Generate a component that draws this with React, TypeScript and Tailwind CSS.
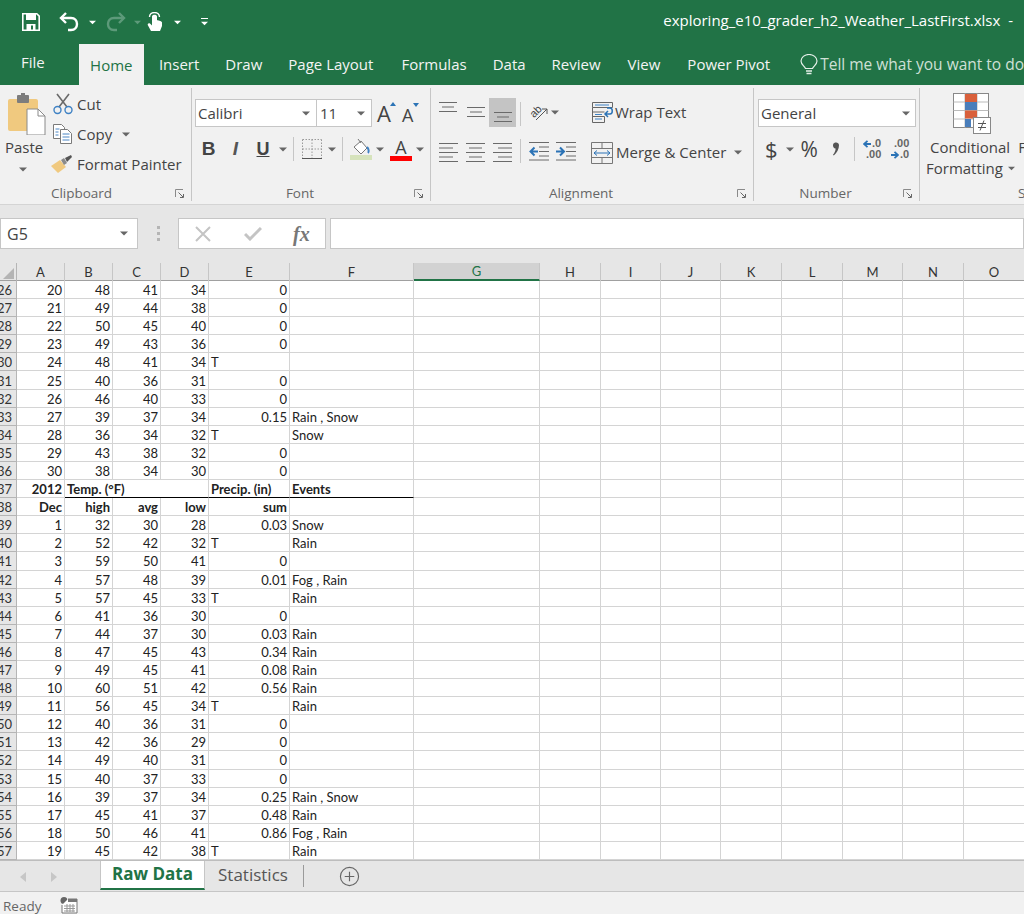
import React from "react";

type Row = [string, string, string, string, string, string, string];
const rows: Row[] = [
  ["26","20","48","41","34","0",""],["27","21","49","44","38","0",""],["28","22","50","45","40","0",""],["29","23","49","43","36","0",""],
  ["30","24","48","41","34","T",""],["31","25","40","36","31","0",""],["32","26","46","40","33","0",""],["33","27","39","37","34","0.15","Rain , Snow"],
  ["34","28","36","34","32","T","Snow"],["35","29","43","38","32","0",""],["36","30","38","34","30","0",""],
  ["37","2012","Temp. (°F)","","","Precip. (in)","Events"],["38","Dec","high","avg","low","sum",""],
  ["39","1","32","30","28","0.03","Snow"],["40","2","52","42","32","T","Rain"],["41","3","59","50","41","0",""],["42","4","57","48","39","0.01","Fog , Rain"],
  ["43","5","57","45","33","T","Rain"],["44","6","41","36","30","0",""],["45","7","44","37","30","0.03","Rain"],["46","8","47","45","43","0.34","Rain"],
  ["47","9","49","45","41","0.08","Rain"],["48","10","60","51","42","0.56","Rain"],["49","11","56","45","34","T","Rain"],["50","12","40","36","31","0",""],
  ["51","13","42","36","29","0",""],["52","14","49","40","31","0",""],["53","15","40","37","33","0",""],["54","16","39","37","34","0.25","Rain , Snow"],
  ["55","17","45","41","37","0.48","Rain"],["56","18","50","46","41","0.86","Fog , Rain"],["57","19","45","42","38","T","Rain"],
];

const colGrid = "grid grid-cols-[17px_48px_48px_48px_48px_81px_124px_126px_61px_60px_60px_61px_61px_60px_61px_61px]";
const headers = ["A","B","C","D","E","F","G","H","I","J","K","L","M","N","O"];

function Caret({ fill = "#666", w = 8 }: { fill?: string; w?: number }) {
  return <svg width={w} height={5} viewBox="0 0 8 5" className="shrink-0"><path d="M0 0.5h8L4 4.5z" fill={fill} /></svg>;
}
function Launcher() {
  return (
    <svg width="10" height="10" viewBox="0 0 10 10" className="shrink-0">
      <path d="M0.5 8V0.5H8" stroke="#8a8a8a" fill="none" />
      <path d="M3.5 3.5L8 8M8.5 5v3.5H5" stroke="#666" fill="none" />
    </svg>
  );
}
function VSep({ cls = "h-[24px]" }: { cls?: string }) {
  return <div className={"w-px bg-[#c6c6c6] shrink-0 " + cls} />;
}
function Lines({ ws }: { ws: [number, number][] }) {
  return (
    <svg width="20" height="20" viewBox="0 0 20 20" className="shrink-0">
      {ws.map(([a, b], i) => (
        <path key={i} d={`M${a} ${1.5 + i * 4.5}H${b}`} stroke="#6a6a6a" />
      ))}
    </svg>
  );
}
function Indent({ dir }: { dir: "l" | "r" }) {
  return (
    <svg width="20" height="20" viewBox="0 0 20 20" className="shrink-0">
      {[1.5, 6, 10.5, 15, 19].map((y, i) => (
        <path key={i} d={i === 0 || i === 4 ? `M0 ${y}H20` : `M10 ${y}H20`} stroke="#6a6a6a" />
      ))}
      {dir === "l" ? (
        <path d="M9 10.5H2M5.5 6.5L1.5 10.5L5.5 14.5" stroke="#2b73b6" strokeWidth="2" fill="none" />
      ) : (
        <path d="M0 10.5H7.5M4 6.5L8 10.5L4 14.5" stroke="#2b73b6" strokeWidth="2" fill="none" />
      )}
    </svg>
  );
}

function Group({ w, label, children, labelCls = "" }: { w: string; label: string; children: React.ReactNode; labelCls?: string }) {
  return (
    <div className={"flex flex-col shrink-0 h-full pt-[3px] pb-[3px] " + w}>
      <div className="flex-1 flex flex-col border-r border-[#c6c6c6] min-h-0">
        <div className="flex-1 min-h-0">{children}</div>
        <div className="h-[22px] pt-[7px] flex items-center text-[13.5px] leading-[15px] text-[#666] pr-[6px]">
          <span className={"flex-1 text-center " + labelCls}>{label}</span>
          <Launcher />
        </div>
      </div>
    </div>
  );
}

function Clipboard() {
  return (
    <div className="flex h-full">
      <div className="w-[51px] flex flex-col items-start shrink-0">
        <svg width="38" height="42" viewBox="0 0 38 42" className="ml-[8px] mt-[5px] shrink-0">
          <rect x="0" y="6" width="30" height="32" rx="2" fill="#f0c97f" />
          <rect x="9" y="2" width="12" height="8" rx="1" fill="#7d7d7d" />
          <rect x="13" y="0" width="4" height="4" fill="#7d7d7d" />
          <path d="M19 16h11l7 7v19H19z" fill="#fff" stroke="#8a8a8a" />
          <path d="M30 16v7h7" fill="none" stroke="#8a8a8a" />
        </svg>
        <span className="ml-[5px] mt-[1px] text-[15px] leading-[22px]">Paste</span>
        <div className="ml-[19px] mt-[9px]"><Caret /></div>
      </div>
      <div className="flex flex-col">
        <div className="h-[30px] flex items-center gap-[3px] mt-[1px]">
          <svg width="20" height="22" viewBox="0 0 20 22" className="ml-[2px]">
            <path d="M4 1l10 13M16 1L6 14" stroke="#6a6a6a" strokeWidth="1.6" />
            <circle cx="4.500" cy="17" r="3.500" fill="none" stroke="#3f82c4" strokeWidth="1.4" />
            <circle cx="15.500" cy="17" r="3.500" fill="none" stroke="#3f82c4" strokeWidth="1.4" />
          </svg>
          <span className="text-[15px] ml-[1px]">Cut</span>
        </div>
        <div className="h-[30px] flex items-center gap-[4px]">
          <svg width="19" height="20" viewBox="0 0 19 20" className="ml-[2px]">
            <path d="M.5.5h8l3 3v11H.5z" fill="#fff" stroke="#7a7a7a" />
            <path d="M7.500 5.500h7l4 4v10h-11z" fill="#fff" stroke="#7a7a7a" />
            <path d="M2.500 5h4M2.500 8h3M2.500 11h3" stroke="#4a86c5" />
            <path d="M9.500 10h7M9.500 13h7M9.500 16h7" stroke="#4a86c5" />
          </svg>
          <span className="text-[15px] ml-[1px]">Copy</span>
          <div className="ml-[6px]"><Caret /></div>
        </div>
        <div className="h-[30px] flex items-center gap-[5px]">
          <svg width="21" height="19" viewBox="0 0 21 19">
            <path d="M0 11L9 5l6 7-8 6z" fill="#f0c97f" />
            <path d="M10 5l3-2 3 5-3 2z" fill="#8a8a8a" />
            <path d="M14 3l6-3 1 2-5 5z" fill="#555" />
          </svg>
          <span className="text-[15px]">Format Painter</span>
        </div>
      </div>
    </div>
  );
}

function Font() {
  return (
    <div className="flex flex-col h-full pl-[3px]">
      <div className="flex items-center mt-[11px] h-[28px]">
        <div className="w-[122px] h-[28px] pt-[1px] bg-white border border-[#c6c6c6] flex items-center justify-between pl-[2px] pr-[6px]">
          <span className="text-[15px]">Calibri</span><Caret />
        </div>
        <div className="w-[55px] h-[28px] pt-[1px] bg-white border border-[#c6c6c6] border-l-0 flex items-center justify-between pl-[3px] pr-[6px]">
          <span className="text-[15px]">11</span><Caret />
        </div>
        <div className="ml-[5px] w-[20px] flex items-start">
          <span className="text-[22px] leading-none">A</span>
          <svg width="6" height="4" viewBox="0 0 6 4" className="-ml-[1px]"><path d="M0 4L3 0l3 4z" fill="#2b73b6" /></svg>
        </div>
        <div className="ml-[5px] w-[20px] flex items-start">
          <span className="text-[18px] leading-none mt-[3px]">A</span>
          <svg width="6" height="4" viewBox="0 0 6 4"><path d="M0 0L3 4l3-4z" fill="#2b73b6" /></svg>
        </div>
      </div>
      <div className="flex items-center mt-[10px] h-[24px]">
        <span className="ml-[6px] w-[15px] text-center font-bold text-[19px] font-['Liberation_Sans',sans-serif]">B</span>
        <span className="ml-[12px] w-[15px] text-center font-bold italic text-[19px] font-['Liberation_Sans',sans-serif] text-[#555]">I</span>
        <span className="ml-[12px] w-[16px] text-center font-bold underline text-[18px] font-['Liberation_Sans',sans-serif]">U</span>
        <div className="ml-[8px]"><Caret /></div>
        <div className="ml-[6px]"><VSep /></div>
        <svg width="20" height="20" viewBox="0 0 20 20" className="ml-[8px]">
          <path d="M.5.5h19M.5 10h19M.5.5v19M10 .5v19M19.5 .5v19" stroke="#9a9a9a" strokeDasharray="1.5 1.5" fill="none" />
          <path d="M0 19.500h20" stroke="#555" />
        </svg>
        <div className="ml-[6px]"><Caret /></div>
        <div className="ml-[6px]"><VSep /></div>
        <svg width="22" height="22" viewBox="0 0 22 22" className="ml-[7px]">
          <path d="M4 9l7-6 6 7-6 6z" fill="#fff" stroke="#777" />
          <path d="M8 1l3 4" stroke="#777" />
          <path d="M17 9c2 2 2 5 1 6" stroke="#3f82c4" strokeWidth="2" fill="none" />
          <rect x="0" y="17" width="22" height="5" fill="#d6e3bc" />
        </svg>
        <div className="ml-[4px]"><Caret /></div>
        <div className="ml-[6px] w-[22px] flex flex-col items-center">
          <span className="text-[18px] leading-[18px] h-[18px]">A</span>
          <div className="w-[22px] h-[5px] bg-[#ff0000]" />
        </div>
        <div className="ml-[4px]"><Caret /></div>
      </div>
    </div>
  );
}

function Alignment() {
  return (
    <div className="flex flex-col h-full">
      <div className="flex h-[29px] mt-[10px] items-start">
        <div className="ml-[8px] mt-[3px] w-[20px]"><Lines ws={[[0,18],[3,15],[0,18]]} /></div>
        <div className="ml-[7px] mt-[8px] w-[20px]"><Lines ws={[[1,19],[4,16],[1,19]]} /></div>
        <div className="ml-[3px] w-[27px] h-[29px] bg-[#c4c4c4] flex items-end justify-center"><div className="-mb-[4px]"><Lines ws={[[1,19],[4,16],[1,19]]} /></div></div>
        <div className="ml-[4px] mt-[4px]"><VSep /></div>
        <svg width="22" height="22" viewBox="0 0 22 22" className="ml-[7px] mt-[3px]">
          <text x="2" y="14" fontSize="11" fill="#444" transform="rotate(-45 8 11)" fontFamily="Liberation Sans">ab</text>
          <path d="M8 19L19 8M14 8h5v5" stroke="#555" fill="none" />
        </svg>
        <div className="ml-[1px] mt-[12px]"><Caret /></div>
        <div className="ml-[33px] flex items-center h-[29px]">
          <svg width="22" height="22" viewBox="0 0 22 22">
            <path d="M.5.5h20v5H.5zM.5 5.500v15h12v-6H.5M.5 10h12" fill="none" stroke="#666" />
            <path d="M3 3h14M3 12.500h7M3 17h7" stroke="#3f82c4" />
            <path d="M15 6h3c3 0 3 6 0 6h-4M16 9l-3 3 3 3" stroke="#2b73b6" strokeWidth="1.500" fill="none" />
          </svg>
          <span className="text-[15px] ml-[1px]">Wrap Text</span>
        </div>
      </div>
      <div className="flex h-[24px] mt-[12px] items-center">
        <div className="ml-[8px] mt-[2px] w-[20px]"><Lines ws={[[0,19],[0,14],[0,19],[0,14],[0,19]]} /></div>
        <div className="ml-[7px] mt-[2px] w-[20px]"><Lines ws={[[0,19],[3,16],[0,19],[3,16],[0,19]]} /></div>
        <div className="ml-[7px] mt-[2px] w-[20px]"><Lines ws={[[0,19],[5,19],[0,19],[5,19],[0,19]]} /></div>
        <div className="ml-[7px]"><VSep /></div>
        <div className="ml-[8px]"><Indent dir="l" /></div>
        <div className="ml-[7px]"><Indent dir="r" /></div>
        <div className="ml-[15px] mt-[3px] flex items-center">
          <svg width="22" height="22" viewBox="0 0 22 22">
            <path d="M.5.5h21v21H.5zM.5 6.500h21M.5 15.500h21M11 .5v6M11 15.500v6" fill="none" stroke="#777" />
            <path d="M3 11h16M6 8.500L3 11l3 2.500M16 8.500l3 2.500-3 2.500" fill="none" stroke="#2b73b6" />
          </svg>
          <span className="text-[15px] ml-[3px]">Merge &amp; Center</span>
          <div className="ml-[8px]"><Caret /></div>
        </div>
      </div>
    </div>
  );
}

function NumberGroup() {
  return (
    <div className="flex flex-col h-full">
      <div className="ml-[4px] mt-[11px] w-[158px] h-[28px] pt-[1px] bg-white border border-[#c6c6c6] flex items-center justify-between pl-[2px] pr-[5px]">
        <span className="text-[15px]">General</span><Caret />
      </div>
      <div className="flex items-center mt-[10px] h-[24px]">
        <span className="ml-[11px] text-[22px] leading-none">$</span>
        <div className="ml-[8px]"><Caret /></div>
        <span className="ml-[7px] text-[21px] leading-none">%</span>
        <svg width="8" height="14" viewBox="0 0 8 14" className="ml-[14px]">
          <path d="M1.500 1.500C2.800-.2 7-.2 7 3.200 7 7 5 10.800 1.800 13.500L1 12.800C2.800 10.500 3.600 8.500 3.600 6.500 1.500 6.800.2 3.500 1.500 1.500z" fill="#555" />
        </svg>
        <div className="ml-[14px]"><VSep /></div>
        <div className="ml-[8px] flex flex-col text-[11px] leading-[11px] font-['Liberation_Sans',sans-serif] font-bold text-[#666] w-[21px]">
          <span className="flex items-center whitespace-nowrap">
            <svg width="8" height="8" viewBox="0 0 8 8" className="mr-[1px]"><path d="M8 4H1.500M4.500 .8L1 4l3.500 3.200" stroke="#2b73b6" strokeWidth="1.800" fill="none" /></svg>
            .0
          </span>
          <span className="ml-[3px]">.00</span>
        </div>
        <div className="ml-[7px] flex flex-col text-[11px] leading-[11px] font-['Liberation_Sans',sans-serif] font-bold text-[#666] w-[21px]">
          <span className="ml-[3px]">.00</span>
          <span className="flex items-center whitespace-nowrap">
            <svg width="8" height="8" viewBox="0 0 8 8" className="mr-[1px]"><path d="M0 4H6.500M3.500 .8L7 4 3.500 7.200" stroke="#2b73b6" strokeWidth="1.800" fill="none" /></svg>
            .0
          </span>
        </div>
      </div>
    </div>
  );
}

function Styles() {
  return (
    <div className="flex flex-col h-full pt-[8px] shrink-0 w-[105px] whitespace-nowrap">
      <svg width="38" height="41" viewBox="0 0 38 41" className="ml-[33px] shrink-0">
        <rect x=".5" y=".5" width="35" height="34" fill="#fff" stroke="#888" />
        <path d="M12 .5v34M24 .5v34M.5 9h35M.5 17.500h35M.5 26h35" stroke="#bbb" />
        <rect x="12" y="1" width="12" height="8" fill="#d9603b" />
        <rect x="12" y="9" width="12" height="8" fill="#4a7ebb" />
        <rect x="12" y="17.500" width="12" height="8" fill="#d9603b" />
        <rect x="12" y="26" width="6" height="8" fill="#4a7ebb" />
        <rect x="20.500" y="24.500" width="17" height="16" fill="#fff" stroke="#888" />
        <path d="M25 30.500h8M25 34.500h8M31 27.500l-4 10" stroke="#555" />
      </svg>
      <div className="ml-[10px] mt-[3px] text-[15px] leading-[21px] flex">
        <span>Conditional</span><span className="ml-[8px]">F</span>
      </div>
      <span className="ml-[6px] text-[15px] leading-[21px] flex items-center gap-[5px]">Formatting <Caret w={7} /></span>
      <span className="ml-[98px] mt-[5px] text-[13.5px] leading-[18px] text-[#666]">S</span>
    </div>
  );
}

export default function App() {
  return (
    <div className="w-[1024px] h-[914px] overflow-hidden flex flex-col bg-[#e6e6e6] text-[#444] font-['Open_Sans','Noto_Sans',sans-serif]">
      {/* title + tabs */}
      <div className="bg-[#217346] h-[85px] shrink-0 flex flex-col text-white">
        <div className="h-[44px] flex items-center justify-between pr-[11px]">
          <div className="flex items-center">
            <svg width="18" height="18" viewBox="0 0 18 18" className="ml-[22px]">
              <path d="M.8.8h14l2.400 2.400v14H.8z" fill="none" stroke="#fff" strokeWidth="1.600" />
              <rect x="4" y="1" width="10" height="6" fill="#fff" />
              <rect x="4.500" y="11" width="9" height="6" fill="#fff" />
              <rect x="9" y="12.500" width="2" height="4" fill="#217346" />
            </svg>
            <svg width="21" height="20" viewBox="0 0 21 20" className="ml-[19px]">
              <path d="M7 1L2 6l5 5" fill="none" stroke="#fff" strokeWidth="2.400" />
              <path d="M2 6h10c8 0 8 12 0 12H9" fill="none" stroke="#fff" strokeWidth="2.400" />
            </svg>
            <div className="ml-[9px]"><Caret fill="#fff" w={7} /></div>
            <svg width="21" height="20" viewBox="0 0 21 20" className="ml-[9px]">
              <path d="M14 1l5 5-5 5" fill="none" stroke="#5d9a7a" strokeWidth="2.400" />
              <path d="M19 6H9c-8 0-8 12 0 12h3" fill="none" stroke="#5d9a7a" strokeWidth="2.400" />
            </svg>
            <div className="ml-[8px]"><Caret fill="#5d9a7a" w={7} /></div>
            <svg width="16" height="20" viewBox="0 0 16 20" className="ml-[6px]">
              <path d="M5 4.500v9L3 11.500c-1.500-1-3 .5-2 2l3 5.500h9l2-5v-3.500c0-1.200-3-2-5-2.200V4.500c0-2.500-5-2.500-5 0z" fill="#fff" />
              <path d="M2.500 5C2.500-1 12.500-1 12.500 5" stroke="#fff" fill="none" strokeWidth="1.400" />
            </svg>
            <div className="ml-[11px]"><Caret fill="#fff" w={7} /></div>
            <div className="ml-[20px] flex flex-col items-center gap-[2px]">
              <div className="w-[7px] h-px bg-white" />
              <Caret fill="#fff" w={7} />
            </div>
          </div>
          <span className="text-[15px] whitespace-pre mb-[4px]">exploring_e10_grader_h2_Weather_LastFirst.xlsx  -</span>
        </div>
        <div className="h-[41px] flex text-[15px] text-[#f4f4f4] whitespace-nowrap">
          <span className="ml-[21px] mt-[7px]">File</span>
          <div className="ml-[34px] w-[68px] bg-[#f1f1f1] text-[#217346] flex items-center justify-center pt-[1px]">Home</div>
          <span className="ml-[15px] flex items-center">Insert</span>
          <span className="ml-[26px] flex items-center">Draw</span>
          <span className="ml-[26px] flex items-center">Page Layout</span>
          <span className="ml-[28px] flex items-center">Formulas</span>
          <span className="ml-[26px] flex items-center">Data</span>
          <span className="ml-[26px] flex items-center">Review</span>
          <span className="ml-[27px] flex items-center">View</span>
          <span className="ml-[27px] flex items-center">Power Pivot</span>
          <svg width="18" height="22" viewBox="0 0 18 22" className="ml-[30px] mt-[10px] shrink-0">
            <path d="M5.500 14.500C4.500 12 1 10.500 1 7a8 6.500 0 0 1 16 0c0 3.500-3.500 5-4.500 7.500z" fill="none" stroke="#e4efe8" strokeWidth="1.200" />
            <path d="M6 17h6M6.500 19.500h5" stroke="#e4efe8" strokeWidth="1.300" />
          </svg>
          <span className="ml-[2px] flex items-center text-[15.5px] text-[#cfe0d6]">Tell me what you want to do</span>
        </div>
      </div>
      {/* ribbon */}
      <div className="h-[120px] shrink-0 bg-[#f1f1f1] border-b border-[#d4d4d4] flex overflow-hidden">
        <Group w="w-[192px]" label="Clipboard" labelCls="pr-[12px]"><Clipboard /></Group>
        <Group w="w-[239px]" label="Font" labelCls="pr-[6px]"><Font /></Group>
        <Group w="w-[323px]" label="Alignment" labelCls="pr-[6px]"><Alignment /></Group>
        <Group w="w-[166px]" label="Number" labelCls="pr-[6px]"><NumberGroup /></Group>
        <Styles />
      </div>
      {/* formula bar */}
      <div className="h-[58px] shrink-0 flex items-start pt-[13px]">
        <div className="w-[138px] h-[31px] bg-white border border-[#c6c6c6] flex items-center justify-between pl-[6px] pr-[9px]">
          <span className="text-[16px]">G5</span><Caret />
        </div>
        <div className="w-[40px] h-[31px] flex flex-col items-center justify-center gap-[3px]">
          <div className="w-[3px] h-[3px] bg-[#b5b5b5]" /><div className="w-[3px] h-[3px] bg-[#b5b5b5]" /><div className="w-[3px] h-[3px] bg-[#b5b5b5]" />
        </div>
        <div className="w-[148px] h-[31px] bg-white border border-[#c6c6c6] flex items-center pl-[16px]">
          <svg width="16" height="16" viewBox="0 0 16 16"><path d="M1 1l14 14M15 1L1 15" stroke="#c4c4c4" strokeWidth="2" /></svg>
          <svg width="18" height="14" viewBox="0 0 18 14" className="ml-[33px]"><path d="M1 7l5 5L17 1" stroke="#c4c4c4" strokeWidth="3" fill="none" /></svg>
          <span className="ml-[31px] italic font-bold text-[20px] text-[#777] font-['Liberation_Serif',serif]">fx</span>
        </div>
        <div className="ml-[4px] flex-1 h-[31px] bg-white border border-[#c6c6c6]" />
      </div>
      {/* sheet */}
      <div className="flex-1 min-h-0 overflow-hidden flex flex-col bg-white font-['Lato','Carlito',sans-serif] text-[13px] leading-[16px] text-[#222]">
        <div className={colGrid + " h-[18px] shrink-0 bg-[#e6e6e6] border-b border-[#a0a0a0] text-[#333]"}>
          <div className="border-r border-[#b5b5b5] flex items-end justify-end pr-[2px] pb-[2px]">
            <svg width="11" height="11" viewBox="0 0 11 11"><path d="M11 0v11H0z" fill="#b4b4b4" /></svg>
          </div>
          {headers.map((h) => (
            <div key={h} className={"flex items-center justify-center border-r border-[#c6c6c6] " + (h === "G" ? "bg-[#d2d2d2] text-[#217346] border-b-2 border-b-[#217346]" : "")}>{h}</div>
          ))}
        </div>
        <div className="flex flex-col shrink-0">
          {rows.map((r) => {
            const hdr = r[0] === "37" || r[0] === "38";
            return (
              <div key={r[0]} className={colGrid + " h-[18.1px] " + (hdr ? "font-bold" : "")}>
                <div className="bg-[#e6e6e6] border-r border-b border-[#b5b5b5] flex items-center justify-end pr-[4px] pt-[1px] overflow-hidden font-normal text-[#333] whitespace-nowrap">{r[0]}</div>
                {r.slice(1).map((v, i) => {
                  const left = v === "T" || i === 5 || v === "Temp. (°F)" || v === "Precip. (in)";
                  const under = r[0] === "37" && i >= 1;
                  const noRight = r[0] === "37" && (i === 1 || i === 2);
                  return (
                    <div
                      key={i}
                      className={"flex items-center whitespace-nowrap px-[2px] pt-[1px] border-b " + (under ? "border-b-black " : "border-b-[#d4d4d4] ") + (noRight ? "" : "border-r border-r-[#d4d4d4] ") + (left ? "justify-start overflow-visible" : "justify-end")}
                    >{v}</div>
                  );
                })}
                {headers.slice(6).map((h) => <div key={h} className="border-r border-b border-[#d4d4d4]" />)}
              </div>
            );
          })}
        </div>
      </div>
      {/* sheet tabs */}
      <div className="h-[31px] shrink-0 bg-[#e6e6e6] border-t border-[#bdbdbd] flex items-start text-[#555] text-[17px]">
        <svg width="6" height="10" viewBox="0 0 6 10" className="ml-[20px] mt-[11px]"><path d="M6 0v10L0 5z" fill="#c6c6c6" /></svg>
        <svg width="6" height="10" viewBox="0 0 6 10" className="ml-[25px] mt-[11px]"><path d="M0 0v10l6-5z" fill="#c6c6c6" /></svg>
        <div className="ml-[43px] w-[105px] h-[29px] pb-[2px] bg-white border-b-2 border-[#217346] border-x border-x-[#c6c6c6] text-[#217346] font-bold flex items-center justify-center whitespace-nowrap">Raw Data</div>
        <div className="ml-[13px] h-[29px] pb-[2px] flex items-center">Statistics</div>
        <div className="ml-[15px] mt-[4px] w-px h-[22px] bg-[#9a9a9a]" />
        <svg width="21" height="21" viewBox="0 0 22 22" className="ml-[35px] mt-[5px]">
          <circle cx="11" cy="11" r="9.500" fill="none" stroke="#666" strokeWidth="1.200" />
          <path d="M11 6v10M6 11h10" stroke="#666" strokeWidth="1.200" />
        </svg>
      </div>
      <div className="h-[23px] shrink-0 bg-[#f1f1f1] border-t border-[#c6c6c6] flex items-center text-[13.5px] text-[#666]">
        <span className="ml-[3px] mt-[6px]">Ready</span>
        <svg width="18" height="17" viewBox="0 0 18 17" className="ml-[19px] mt-[5px]">
          <circle cx="4" cy="3.500" r="3.500" fill="#666" />
          <path d="M8 2h9v14H2V8" fill="#fff" stroke="#777" />
          <path d="M8 2h9v3H8z" fill="#777" />
          <path d="M4 9h11M4 11.500h11M4 14h11M7 7v8M10 7v8M13 7v8" stroke="#999" />
        </svg>
      </div>
    </div>
  );
}
